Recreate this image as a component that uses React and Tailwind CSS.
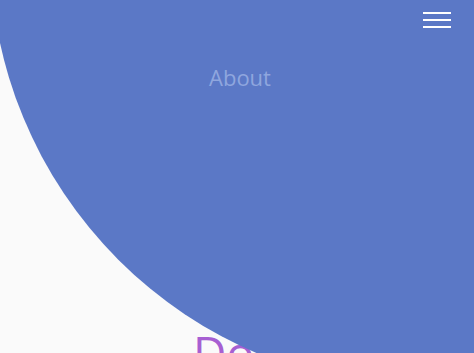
export default function App() {
  return (
    <div
      className="relative h-[353px] w-full overflow-hidden bg-[#fafafa]"
      style={{ fontFamily: '"Open Sans", "Noto Sans", sans-serif' }}
    >
      <div className="absolute left-[-10px] top-[-488px] z-10 h-[876px] w-[876px] rounded-full bg-[#5b78c6]" />
      <div className="flex flex-col">
        <header className="relative z-20 flex justify-end pt-3 pr-[23px]">
          <button className="flex flex-col gap-[5px]" aria-label="Menu">
            <span className="block h-[2px] w-[28px] bg-white" />
            <span className="block h-[2px] w-[28px] bg-white" />
            <span className="block h-[2px] w-[28px] bg-white" />
          </button>
        </header>
        <nav className="relative z-20 mt-[34px] flex justify-center">
          <a className="pl-[6px] text-[22px] leading-[30px] text-[#8fa6de]">About</a>
        </nav>
        <h1 className="mt-[237px] pl-[193px] text-[46px] leading-[46px] text-[#a75fd2]">
          Do
        </h1>
      </div>
    </div>
  );
}
